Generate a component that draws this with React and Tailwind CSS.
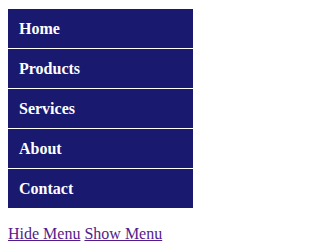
import React from 'react';

const items = ['Home', 'Products', 'Services', 'About', 'Contact'];

export default function App() {
  return (
    <div className="min-h-[252px] bg-white pt-[9px] px-2 font-['Liberation_Serif',serif] text-[16px]">
      <ul className="w-[185px] m-0 p-0 list-none">
        {items.map((item) => (
          <li key={item} className="bg-[#191970] border-b border-white pl-[11px] pr-[10px] pt-[10px] pb-[10px] leading-[19px]">
            <a href="#" className="text-white font-bold no-underline">{item}</a>
          </li>
        ))}
      </ul>
      <div className="mt-4 leading-[18px]">
        <a href="#" className="text-[#551a8b] underline">Hide Menu</a>{' '}
        <a href="#" className="text-[#551a8b] underline">Show Menu</a>
      </div>
    </div>
  );
}
